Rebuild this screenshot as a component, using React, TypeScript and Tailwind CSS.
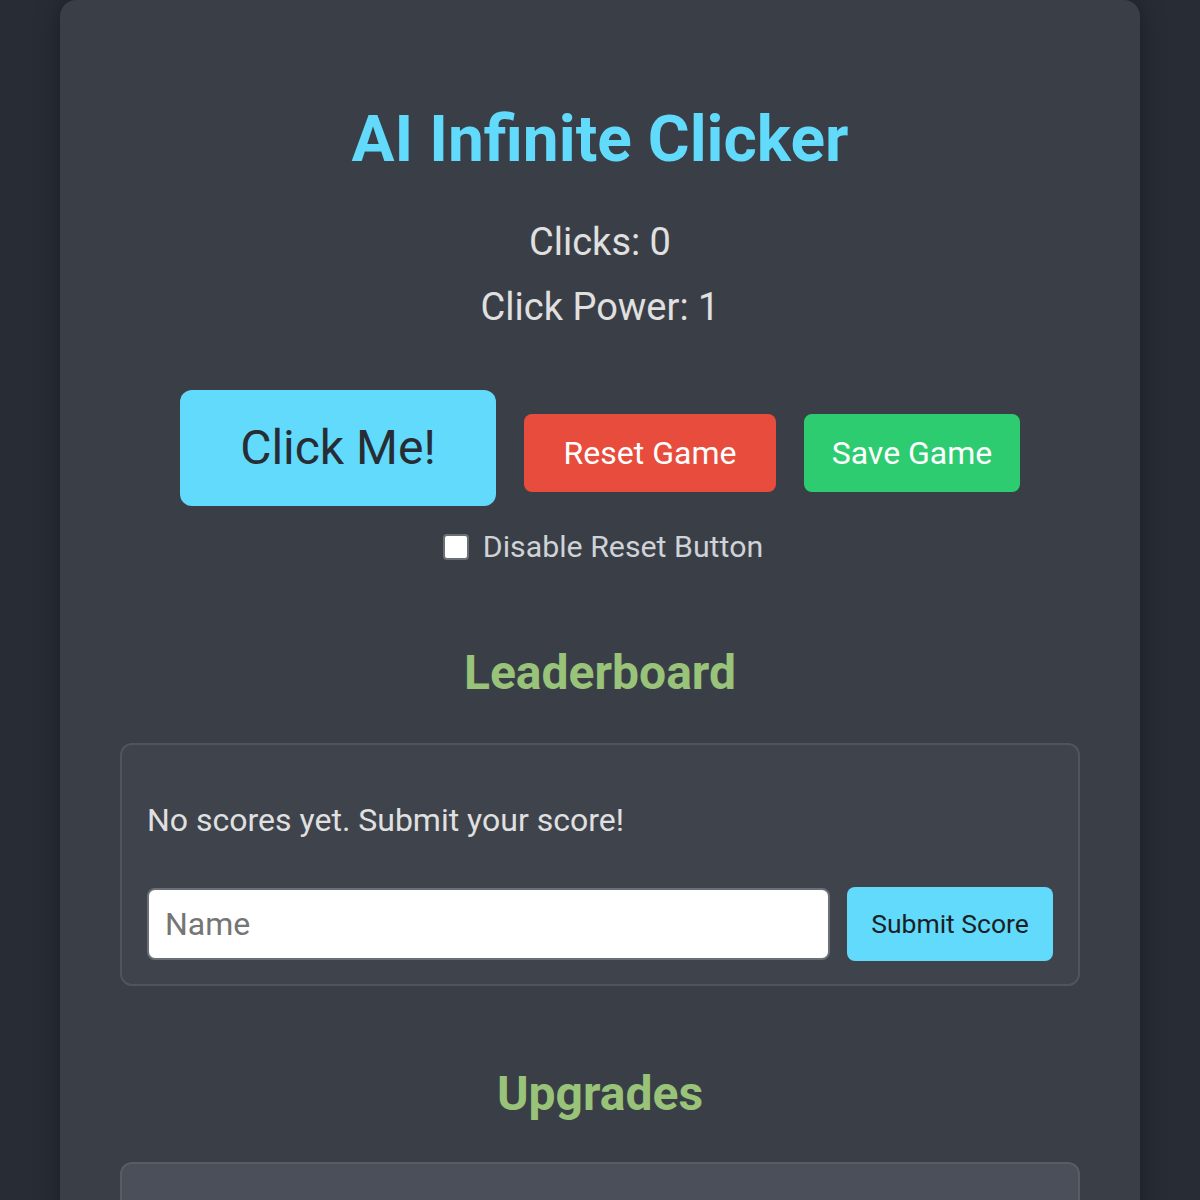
import { useState } from 'react';

const font = { fontFamily: 'Roboto, "Noto Sans", sans-serif' };

export default function App() {
  const [name, setName] = useState('');

  return (
    <div
      className="flex min-h-[1200px] justify-center bg-[#282c34] text-[#e0e0e0]"
      style={font}
    >
      <div className="w-[1080px] rounded-[16px] bg-[#3a3f47] px-[60px] pt-[100px] pb-10 text-center shadow-[0_0_24px_rgba(0,0,0,0.35)]">
        <h1 className="text-[64px] font-bold leading-[80px] text-[#61dafb]">AI Infinite Clicker</h1>

        <p className="mt-[41px] text-[38px] leading-[42px] text-[#e0e0e0]">Clicks: 0</p>
        <p className="mt-[23px] text-[38px] leading-[42px] text-[#e0e0e0]">Click Power: 1</p>

        <div className="mt-[62px] flex items-baseline justify-center gap-[28px]">
          <button
            type="button"
            className="h-[116px] w-[316px] rounded-[12px] bg-[#61dafb] text-[48px] text-[#282c34]"
          >
            Click Me!
          </button>
          <button
            type="button"
            className="h-[78px] w-[252px] rounded-[8px] bg-[#e74c3c] text-[32px] text-white"
          >
            Reset Game
          </button>
          <button
            type="button"
            className="h-[78px] w-[216px] rounded-[8px] bg-[#2ecc71] text-[32px] text-white"
          >
            Save Game
          </button>
        </div>

        <label className="mt-[23px] flex items-center justify-center gap-[14px] pl-[6px] text-[30.3px] leading-[36px] text-[#cfd2d6]">
          <input
            type="checkbox"
            className="h-[26px] w-[26px] shrink-0 appearance-none rounded-[4px] border-2 border-[#6b6f76] bg-white"
          />
          Disable Reset Button
        </label>

        <h2 className="mt-[80px] text-[48px] font-bold leading-[56px] text-[#98c379]">Leaderboard</h2>

        <div className="mt-[42px] rounded-[12px] border-2 border-[#50555d] bg-[#3e434c] px-[25px] pt-[55px] pb-[23px] text-left">
          <p className="text-[32px] leading-[40px] text-[#e0e0e0]">No scores yet. Submit your score!</p>
          <div className="mt-[47px] flex items-center gap-[17px]">
            <input
              value={name}
              onChange={(e) => setName(e.target.value)}
              placeholder="Name"
              className="h-[72px] flex-1 rounded-[8px] border-2 border-[#6b6f76] bg-white px-[16px] text-[32px] text-[#222] placeholder:text-[#757575] outline-none"
            />
            <button
              type="button"
              className="h-[74px] w-[206px] rounded-[8px] bg-[#61dafb] text-[26.5px] text-[#1b1f24]"
            >
              Submit Score
            </button>
          </div>
        </div>

        <h2 className="mt-[80px] text-[48px] font-bold leading-[56px] text-[#98c379]">Upgrades</h2>

        <div className="mt-[40px] h-[200px] rounded-[12px] border-2 border-[#575c65] bg-[#4a4f59]" />
      </div>
    </div>
  );
}
